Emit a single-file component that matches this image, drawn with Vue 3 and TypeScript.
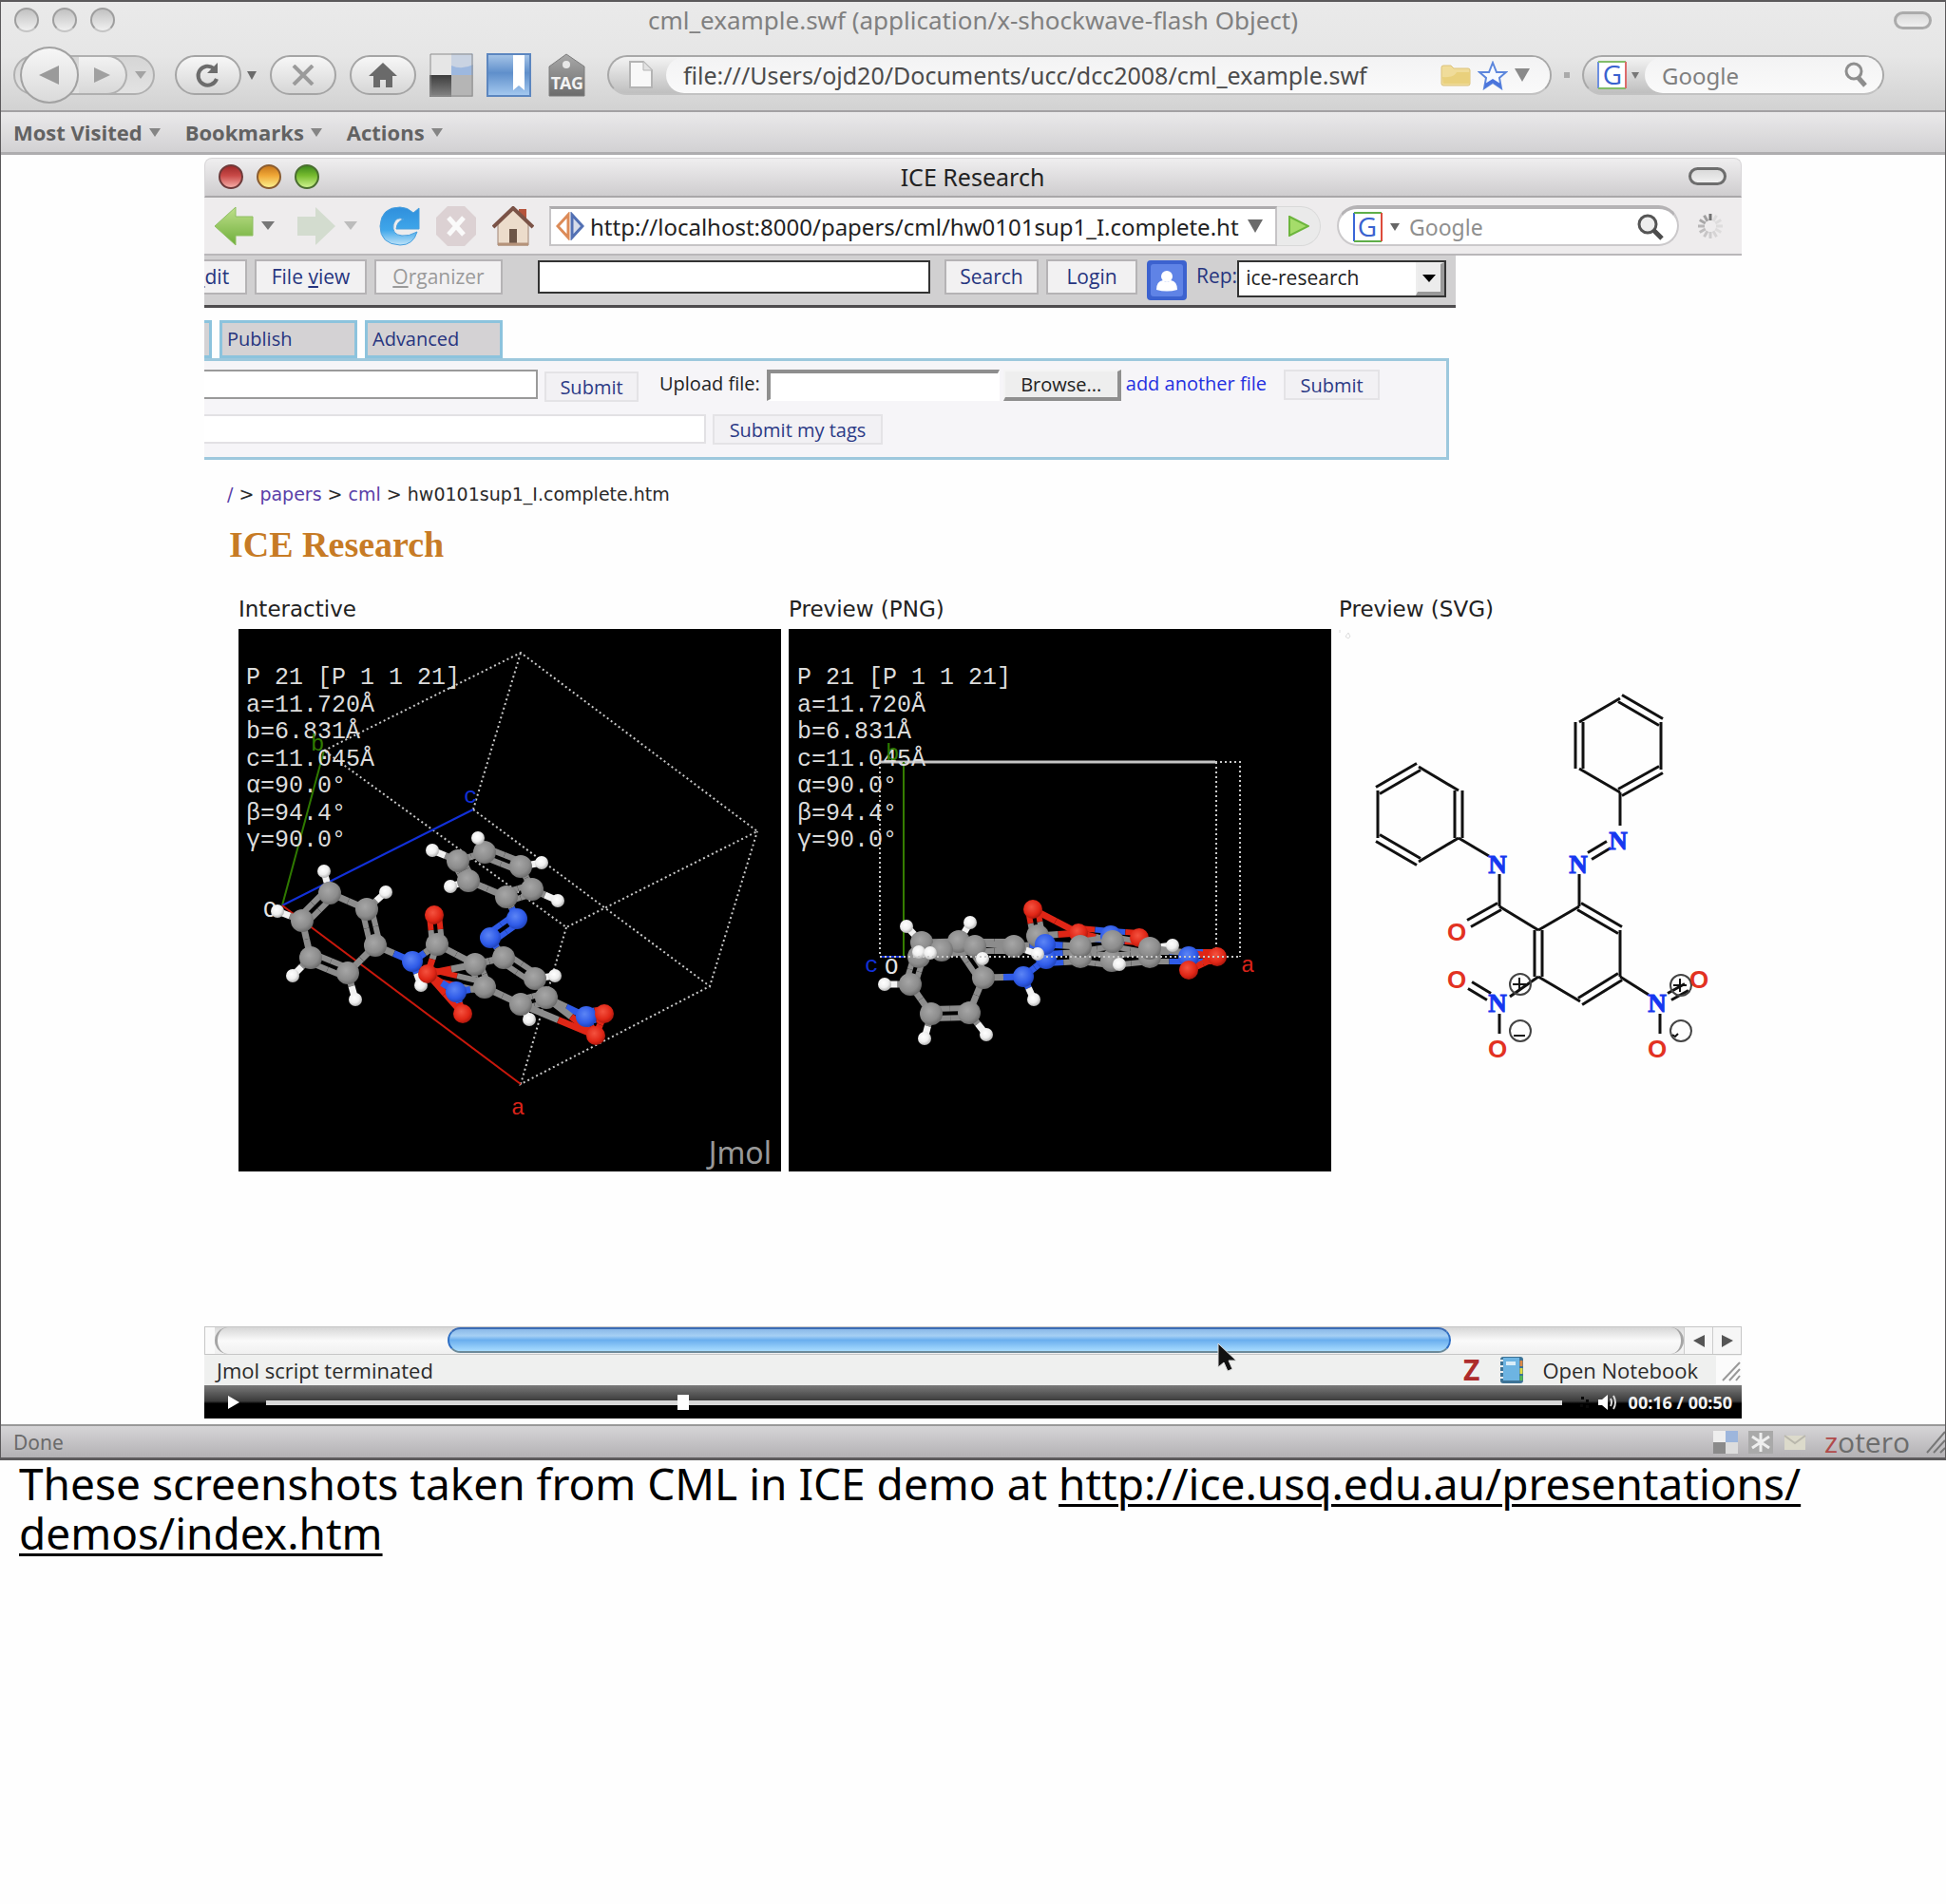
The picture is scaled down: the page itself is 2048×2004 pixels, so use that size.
<script setup lang="ts">
import { ref } from 'vue'

type Element = 'C' | 'H' | 'N' | 'O'
type Atom = [Element, number, number]
type Bond = [number, number, number]
interface Stroke { x1: number; y1: number; x2: number; y2: number; color: string; width: number }

const palette: Record<Element, string> = { C: '#8c8c8c', H: '#f2f2f2', N: '#2f5be8', O: '#e02616' }
const radii: Record<Element, number> = { C: 12, H: 7, N: 11, O: 10 }

const cellInfo = ['P 21 [P 1 1 21]', 'a=11.720Å', 'b=6.831Å', 'c=11.045Å', 'α=90.0°', 'β=94.4°', 'γ=90.0°']
const baselines = [58, 87, 115, 144, 172, 201, 229]

function strokes(atoms: Atom[], bonds: Bond[]): Stroke[] {
  const out: Stroke[] = []
  for (const [a, b, order] of bonds) {
    const [ea, xa, ya] = atoms[a]
    const [eb, xb, yb] = atoms[b]
    const len = Math.hypot(xb - xa, yb - ya) || 1
    const nx = -(yb - ya) / len
    const ny = (xb - xa) / len
    const mx = (xa + xb) / 2
    const my = (ya + yb) / 2
    const shifts = order === 2 ? [-5, 5] : [0]
    for (const s of shifts) {
      const ox = nx * s
      const oy = ny * s
      const width = order === 2 ? 6 : 7
      out.push({ x1: xa + ox, y1: ya + oy, x2: mx + ox, y2: my + oy, color: palette[ea], width })
      out.push({ x1: mx + ox, y1: my + oy, x2: xb + ox, y2: yb + oy, color: palette[eb], width })
    }
  }
  return out
}

const atomsA: Atom[] = [
  ['C', 96, 278], ['C', 135, 295], ['C', 144, 333], ['C', 115, 362], ['C', 76, 346], ['C', 67, 307],
  ['H', 90, 255], ['H', 155, 277], ['H', 41, 297], ['H', 57, 365], ['H', 123, 390],
  ['N', 183, 350], ['H', 192, 375], ['O', 206, 301], ['C', 209, 332],
  ['C', 282, 282], ['C', 309, 274], ['C', 297, 250], ['C', 259, 235], ['C', 231, 244], ['C', 242, 265],
  ['H', 252, 220], ['H', 204, 233], ['H', 223, 271], ['H', 319, 246], ['H', 336, 286],
  ['N', 293, 305], ['N', 265, 325],
  ['O', 199, 363], ['C', 249, 353], ['C', 279, 346], ['C', 312, 368], ['C', 259, 377],
  ['H', 333, 365], ['H', 306, 411], ['C', 324, 388], ['C', 297, 395],
  ['N', 229, 382], ['O', 236, 405], ['O', 376, 428], ['N', 366, 408], ['O', 385, 405],
]
const bondsA: Bond[] = [
  [0, 1, 1], [1, 2, 2], [2, 3, 1], [3, 4, 2], [4, 5, 1], [5, 0, 2],
  [0, 6, 1], [1, 7, 1], [5, 8, 1], [4, 9, 1], [3, 10, 1], [2, 11, 1], [11, 12, 1],
  [11, 14, 1], [14, 13, 2], [14, 28, 1], [14, 29, 1],
  [15, 16, 2], [16, 17, 1], [17, 18, 2], [18, 19, 1], [19, 20, 2], [20, 15, 1],
  [18, 21, 1], [19, 22, 1], [20, 23, 1], [17, 24, 1], [16, 25, 1],
  [15, 26, 1], [26, 27, 2], [27, 30, 1],
  [29, 30, 1], [30, 31, 2], [31, 35, 1], [35, 36, 2], [36, 32, 1], [32, 29, 2],
  [31, 33, 1], [36, 34, 1], [28, 32, 2], [28, 29, 1], [28, 38, 1], [28, 37, 1], [32, 37, 1], [37, 38, 1],
  [35, 40, 1], [36, 39, 1], [35, 39, 1], [40, 41, 2], [41, 39, 1], [40, 39, 1],
]

const atomsB: Atom[] = [
  ['C', 179, 329], ['H', 191, 309], ['C', 140, 330], ['H', 124, 313], ['C', 161, 338], ['C', 196, 334],
  ['C', 237, 334], ['C', 262, 323], ['O', 257, 295], ['N', 271, 347], ['N', 270, 332], ['H', 262, 342],
  ['O', 305, 320], ['N', 339, 323], ['O', 369, 325],
  ['C', 307, 345], ['C', 307, 334], ['C', 340, 349], ['C', 341, 329], ['C', 380, 345], ['C', 380, 336],
  ['H', 404, 333], ['N', 421, 345], ['O', 451, 345], ['O', 421, 359], ['H', 348, 353],
  ['C', 137, 345], ['H', 137, 340], ['H', 149, 341], ['C', 128, 374], ['H', 101, 374], ['C', 150, 405],
  ['C', 190, 404], ['C', 205, 367], ['N', 247, 366], ['H', 258, 390], ['H', 143, 431], ['H', 208, 427],
  ['H', 204, 347],
]
const bondsB: Bond[] = [
  [0, 1, 1], [2, 3, 1], [2, 0, 1], [2, 4, 1], [4, 5, 2], [5, 6, 2], [0, 6, 1], [6, 10, 1], [6, 11, 1],
  [7, 8, 2], [8, 12, 1], [7, 10, 1], [9, 10, 1], [9, 15, 2], [10, 16, 1], [12, 7, 1], [12, 13, 2], [13, 14, 2],
  [12, 18, 1], [16, 18, 2], [15, 17, 2], [18, 20, 2], [17, 19, 2], [14, 20, 1], [20, 21, 1], [19, 22, 2],
  [22, 23, 2], [20, 23, 1], [23, 24, 1], [22, 24, 1], [17, 25, 1],
  [26, 29, 2], [29, 30, 1], [29, 31, 1], [31, 32, 2], [32, 33, 1], [33, 0, 2], [33, 34, 1], [34, 9, 1],
  [34, 35, 1], [31, 36, 1], [32, 37, 1],
]

const strokesA = strokes(atomsA, bondsA)
const strokesB = strokes(atomsB, bondsB)

const nodes: [number, number][] = [
  [84, 145], [41, 170], [41, 220], [84, 245], [126, 220], [126, 170],
  [158, 239], [169, 258], [169, 292], [137, 310],
  [210, 317], [253, 292], [296, 317], [296, 366], [254, 392], [210, 366],
  [253, 258], [296, 207], [296, 172], [339, 148], [339, 98], [296, 73], [253, 98], [253, 147],
  [264, 239], [284, 227], [180, 387], [169, 405], [169, 426], [138, 375], [158, 387],
  [326, 385], [338, 405], [338, 426], [348, 387], [366, 377],
]
const links: Bond[] = [
  [0, 1, 2], [1, 2, 1], [2, 3, 2], [3, 4, 1], [4, 5, 2], [5, 0, 1], [4, 6, 1], [7, 8, 1], [8, 9, 2],
  [8, 10, 1], [10, 11, 1], [11, 12, 2], [12, 13, 1], [13, 14, 2], [14, 15, 1], [15, 10, 2], [11, 16, 1],
  [17, 18, 1], [18, 19, 2], [19, 20, 1], [20, 21, 2], [21, 22, 1], [22, 23, 2], [23, 18, 1], [24, 25, 2],
  [15, 26, 1], [27, 28, 1], [29, 30, 2], [13, 31, 1], [32, 33, 1], [34, 35, 2],
]
const flat = links.flatMap(([a, b, order]) => {
  const [xa, ya] = nodes[a]
  const [xb, yb] = nodes[b]
  const len = Math.hypot(xb - xa, yb - ya)
  const nx = -(yb - ya) / len
  const ny = (xb - xa) / len
  return (order === 2 ? [-4, 4] : [0]).map((s) => ({
    x1: xa + nx * s, y1: ya + ny * s, x2: xb + nx * s, y2: yb + ny * s,
  }))
})
const symbols: Atom[] = [
  ['N', 167, 257], ['N', 252, 257], ['N', 294, 232], ['N', 167, 403], ['N', 335, 403],
  ['O', 124, 328], ['O', 124, 378], ['O', 167, 451], ['O', 335, 451], ['O', 379, 378],
]
const charges: [number, number, string][] = [
  [191, 374, 'M183 374h14M190 367v14'], [191, 423, 'M184 428h12'],
  [360, 375, 'M352 375h14M359 368v14'], [360, 423, 'M351 427l3 2l3 -3'],
]

const spokes = [0.8, 0.1, 0.1, 0.1, 0.1, 0.15, 0.2, 0.25, 0.3, 0.35, 0.45, 0.5]

const address = ref('file:///Users/ojd20/Documents/ucc/dcc2008/cml_example.swf')
const innerAddress = ref('http://localhost:8000/papers/cml/hw0101sup1_I.complete.htm')
const position = ref(16)
</script>

<template>
  <div class="page">
    <svg class="defs" width="0" height="0" aria-hidden="true">
      <defs>
        <radialGradient id="ball-C" cx="42%" cy="38%" r="62%"><stop offset="0" stop-color="#a6a6a6" /><stop offset="0.7" stop-color="#8c8c8c" /><stop offset="1" stop-color="#6c6c6c" /></radialGradient>
        <radialGradient id="ball-H" cx="42%" cy="38%" r="62%"><stop offset="0" stop-color="#ffffff" /><stop offset="0.6" stop-color="#efefef" /><stop offset="1" stop-color="#b4b4b4" /></radialGradient>
        <radialGradient id="ball-N" cx="42%" cy="38%" r="62%"><stop offset="0" stop-color="#5c85f5" /><stop offset="0.7" stop-color="#2f5be8" /><stop offset="1" stop-color="#2144bc" /></radialGradient>
        <radialGradient id="ball-O" cx="42%" cy="38%" r="62%"><stop offset="0" stop-color="#f4523f" /><stop offset="0.7" stop-color="#e02616" /><stop offset="1" stop-color="#ac180d" /></radialGradient>
        <linearGradient id="green" x2="0" y2="1"><stop offset="0" stop-color="#bfe08c" /><stop offset="1" stop-color="#6fae3a" /></linearGradient>
        <linearGradient id="sky" x2="0" y2="1"><stop offset="0" stop-color="#2f8fdc" /><stop offset="0.6" stop-color="#3fa6ea" /><stop offset="1" stop-color="#bfe3f8" /></linearGradient>
        <linearGradient id="slate" x2="0" y2="1"><stop offset="0" stop-color="#a9a9a9" /><stop offset="1" stop-color="#6c6c6c" /></linearGradient>
        <linearGradient id="coal" x2="0" y2="1"><stop offset="0" stop-color="#3c3c3c" /><stop offset="1" stop-color="#858585" /></linearGradient>
        <linearGradient id="book" x2="0" y2="1"><stop offset="0" stop-color="#a8c6e8" /><stop offset="0.45" stop-color="#5f8fcb" /><stop offset="1" stop-color="#a6caf0" /></linearGradient>
      </defs>
    </svg>

    <section class="browser">
      <header class="chrome">
        <div class="titlebar">
          <span class="lights"><i></i><i></i><i></i></span>
          <span class="window-title">cml_example.swf (application/x-shockwave-flash Object)</span>
          <span class="pill"></span>
        </div>
        <div class="toolbar">
          <div class="history">
            <button class="back" aria-label="Back"><svg width="24" height="22"><path d="M1 11 22 1V21Z" fill="#9a9a9a" /></svg></button>
            <button class="forward" aria-label="Forward"><svg width="18" height="18"><path d="M17 9 0 1V17Z" fill="#a0a0a0" /></svg></button>
            <button class="recent" aria-label="Recent pages"><svg width="12" height="8"><path d="M0 0H12L6 8Z" fill="#a3a3a3" /></svg></button>
          </div>
          <button class="capsule reload" aria-label="Reload"><svg width="28" height="28"><path d="M20 7A10 10 0 1 0 23 18" fill="none" stroke="#6c6c6c" stroke-width="4" /><path d="M24 1V12H13Z" fill="#6c6c6c" /></svg></button>
          <svg class="reload-caret" width="10" height="9"><path d="M0 0H10L5 9Z" fill="#6a6a6a" /></svg>
          <button class="capsule stop" aria-label="Stop"><svg width="24" height="22"><path d="M2 1 22 21M22 1 2 21" stroke="#9b9b9b" stroke-width="4" /></svg></button>
          <button class="capsule home" aria-label="Home"><svg width="30" height="26"><path d="M15 0 30 14H25V26H18V18H12V26H5V14H0Z" fill="#6a6a6a" /></svg></button>
          <button class="bare delicious" aria-label="Delicious"><svg width="46" height="46"><path d="M0 0H23V23H0Z" fill="#e6e6e6" /><path d="M23 0H46V23H23Z" fill="#9db8df" /><path d="M23 0H46V12Q34 18 23 13Z" fill="#c9d3e2" /><path d="M0 23H23V46H0Z" fill="url(#coal)" /><path d="M23 23H46V46H23Z" fill="#b5b5b5" /><path d="M1 1H45V45H1Z" fill="none" stroke="#8d8d8d" /></svg></button>
          <button class="bare shelf" aria-label="Bookmarks sidebar"><svg width="47" height="46"><path d="M1 1H46V45H1Z" fill="url(#book)" stroke="#5c86bf" stroke-width="2" /><path d="M28 2H40V39L34 34 28 39Z" fill="#fff" /></svg></button>
          <button class="bare tag" aria-label="Tag"><svg width="39" height="46"><path d="M19 1 38 14V45H1V14Z" fill="url(#slate)" stroke="#7d7d7d" /><circle cx="19" cy="12" r="4" fill="#e8e8e8" /><text x="20" y="38" text-anchor="middle" class="tag-text">TAG</text></svg></button>
          <div class="location">
            <svg class="doc" width="25" height="30"><path d="M1 1H15L24 10V28H1Z" fill="#f8f8f8" stroke="#b4b4b4" stroke-width="2" /><path d="M15 1V10H24" fill="#e2e2e2" stroke="#b4b4b4" /></svg>
            <div class="field">
              <input v-model="address" aria-label="Address" />
              <svg width="32" height="24"><path d="M1 4Q1 2 3 2H11L14 5H29Q31 5 31 7V21Q31 23 29 23H3Q1 23 1 21Z" fill="#f0dc9a" stroke="#dcc27a" /><path d="M2 14Q14 15 17 9H31V21H3Z" fill="#e9d07c" /></svg>
              <svg width="32" height="31"><path d="M16 2 20 12 30 12 23 18 25 29 16 23 7 29 9 18 2 12 12 12Z" fill="#f6faff" stroke="#5c86dc" stroke-width="2" /><path d="M8 24 16 19 24 24 25 29 16 23 7 29Z" fill="#4a74dc" /></svg>
              <svg width="16" height="14"><path d="M0 0H16L8 14Z" fill="#8a8a8a" /></svg>
            </div>
          </div>
          <span class="grip"></span>
          <div class="finder">
            <svg class="glogo" width="32" height="32"><path d="M2 2H30V30H2Z" fill="#fff" /><path d="M1 2V30" stroke="#6d8fe0" stroke-width="2" /><path d="M1 2H30M1 30H30" stroke="#83bd6a" stroke-width="2" /><path d="M30 2V30" stroke="#dd6b6b" stroke-width="2" /><text x="16" y="26" text-anchor="middle">G</text></svg>
            <svg class="gcaret" width="8" height="7"><path d="M0 0H8L4 7Z" fill="#777" /></svg>
            <div class="field">
              <input placeholder="Google" aria-label="Search the web" />
              <svg width="26" height="28"><circle cx="11" cy="10" r="8" fill="none" stroke="#8e8e8e" stroke-width="3" /><path d="M15 16 23 25" stroke="#8e8e8e" stroke-width="5" /></svg>
            </div>
          </div>
        </div>
      </header>

      <nav class="bookmarks">
        <button>Most Visited <svg width="12" height="9"><path d="M0 0H12L6 9Z" /></svg></button>
        <button>Bookmarks <svg width="12" height="9"><path d="M0 0H12L6 9Z" /></svg></button>
        <button>Actions <svg width="12" height="9"><path d="M0 0H12L6 9Z" /></svg></button>
      </nav>

      <main class="viewport">
        <div class="inner">
          <div class="inner-title">
            <span class="lights aqua"><i class="red"></i><i class="amber"></i><i class="lime"></i></span>
            <span class="inner-name">ICE Research</span>
            <span class="pill"></span>
          </div>

          <div class="inner-toolbar">
            <button class="bare" aria-label="Back"><svg width="42" height="42"><path d="M1 21 23 1V11H41V31H23V41Z" fill="url(#green)" stroke="#8fbf63" /></svg></button>
            <svg class="caret" width="14" height="9"><path d="M0 0H14L7 9Z" fill="#777" /></svg>
            <button class="bare" aria-label="Forward"><svg width="42" height="42"><path d="M41 21 20 1V11H1V31H20V41Z" fill="#d3dccf" /></svg></button>
            <svg class="caret" width="14" height="9"><path d="M0 0H14L7 9Z" fill="#bcbcbc" /></svg>
            <button class="bare" aria-label="Reload"><svg width="43" height="42"><path d="M42 2V24H18Q19 15 26 14 18 10 15 19 13 30 24 31 31 32 40 27 36 41 22 41 1 40 1 21 2 1 22 1 30 1 36 7Z" fill="url(#sky)" stroke="#4a9fdd" /></svg></button>
            <button class="bare spaced" aria-label="Stop"><svg width="44" height="42"><path d="M13 0H31L43 12V30L31 42H13L1 30V12Z" fill="#dcd1d3" /><path d="M14 12 30 30M30 12 14 30" stroke="#fafafa" stroke-width="5" /></svg></button>
            <button class="bare spaced" aria-label="Home"><svg width="44" height="42"><path d="M28 3H36V16H28Z" fill="#b6543c" /><path d="M6 19 22 3 38 19V41H6Z" fill="#ecdccb" stroke="#a08474" /><path d="M1 22 22 2 43 22" fill="none" stroke="#7b5347" stroke-width="4" /><path d="M18 24H26V41H18Z" fill="#6d5648" /><path d="M6 40H38" stroke="#b5937a" stroke-width="3" /></svg></button>
            <div class="inner-location">
              <svg width="30" height="30"><path d="M13 3 2 15 13 27Z" fill="#fff" stroke="#dc8b58" stroke-width="3" /><path d="M17 3 28 15 17 27Z" fill="#d7dcea" stroke="#5270b4" stroke-width="3" /></svg>
              <input v-model="innerAddress" aria-label="Inner address" />
              <svg width="16" height="14"><path d="M0 0H16L8 14Z" fill="#6b6b6b" /></svg>
            </div>
            <button class="go" aria-label="Go"><svg width="22" height="22"><path d="M1 1 21 11 1 21Z" fill="#a5dc6a" stroke="#6cb53c" stroke-width="2" /></svg></button>
            <div class="inner-finder">
              <svg class="glogo" width="31" height="32"><path d="M1 1V31" stroke="#3a66d8" stroke-width="2" /><path d="M1 1H30M1 31H30" stroke="#5fae4a" stroke-width="2" /><path d="M30 1V31" stroke="#dd4b3b" stroke-width="2" /><text x="15" y="26" text-anchor="middle">G</text></svg>
              <svg width="10" height="8"><path d="M0 0H10L5 8Z" fill="#666" /></svg>
              <input placeholder="Google" aria-label="Inner search" />
              <svg width="29" height="28"><circle cx="11" cy="11" r="9" fill="#eee" stroke="#555" stroke-width="3" /><path d="M17 17 26 26" stroke="#4c4c4c" stroke-width="5" /></svg>
            </div>
            <svg class="spinner" width="30" height="32"><path v-for="(opacity, i) in spokes" :key="i" d="M15 10V3" stroke="#555" stroke-width="3" :opacity="opacity" :transform="`rotate(${i * 30} 15 16)`" /></svg>
          </div>

          <div class="appbar">
            <button class="flatbtn edit"><u>E</u>dit</button>
            <button class="flatbtn view">File <u>v</u>iew</button>
            <button class="flatbtn organizer" disabled><u>O</u>rganizer</button>
            <input class="query" aria-label="Site search" />
            <button class="flatbtn search">Search</button>
            <button class="flatbtn login">Login</button>
            <svg class="person" width="42" height="42"><rect width="42" height="42" rx="4" fill="#3c62cf" /><rect x="4" y="4" width="34" height="34" rx="3" fill="#5f83e6" /><circle cx="21" cy="17" r="6" fill="#fff" /><path d="M10 31Q10 22 17 21 21 25 25 21 32 22 32 31 21 34 10 31Z" fill="#fff" /></svg>
            <label for="rep">Rep:</label>
            <div class="select">
              <select id="rep"><option>ice-research</option></select>
              <span class="drop"><svg width="14" height="8"><path d="M0 0H14L7 8Z" /></svg></span>
            </div>
          </div>

          <div class="tabs">
            <span class="tab stub"></span>
            <button class="tab">Publish</button>
            <button class="tab">Advanced</button>
          </div>
          <div class="panel">
            <div class="line one">
              <input class="comment" aria-label="Comment" />
              <button class="soft low">Submit</button>
              <label for="upload">Upload file:</label>
              <input id="upload" class="file" readonly />
              <button class="browse">Browse...</button>
              <a href="#add">add another file</a>
              <button class="soft end">Submit</button>
            </div>
            <div class="line two">
              <input class="tags" aria-label="Tags" />
              <button class="soft wide">Submit my tags</button>
            </div>
          </div>

          <nav class="crumbs"><a href="#root">/</a> &gt; <a href="#papers">papers</a> &gt; <a href="#cml">cml</a> &gt; hw0101sup1_I.complete.htm</nav>
          <h1>ICE Research</h1>

          <div class="gallery">
            <figure>
              <figcaption>Interactive</figcaption>
              <svg class="scene" viewBox="0 0 571 571" width="571" height="571">
                <g class="cell">
                  <path d="M90 128 297 25 546 213 345 314ZM247 190 297 25M247 190 496 376 546 213M345 314 297 479 496 376" />
                </g>
                <path d="M46 291 90 128" stroke="#2f7a00" stroke-width="2" />
                <path d="M46 291 247 190" stroke="#1230d8" stroke-width="2" />
                <path d="M46 291 297 479" stroke="#c8180c" stroke-width="2" />
                <text class="axis" x="26" y="303" fill="#e4e4e4">O</text>
                <line v-for="(s, i) in strokesA" :key="'s' + i" :x1="s.x1" :y1="s.y1" :x2="s.x2" :y2="s.y2" :stroke="s.color" :stroke-width="s.width" />
                <circle v-for="(a, i) in atomsA" :key="'a' + i" :cx="a[1]" :cy="a[2]" :r="radii[a[0]]" :fill="`url(#ball-${a[0]})`" />
                <text v-for="(t, i) in cellInfo" :key="t" class="info" x="8" :y="baselines[i]">{{ t }}</text>
                <text class="axis" x="76" y="128" fill="#2f7a00">b</text>
                <text class="axis" x="237" y="183" fill="#1230d8">c</text>
                <text class="axis" x="287" y="511" fill="#d8231a">a</text>
                <text class="jmol" x="561" y="563" text-anchor="end">Jmol</text>
              </svg>
            </figure>
            <figure>
              <figcaption>Preview (PNG)</figcaption>
              <svg class="scene" viewBox="0 0 571 571" width="571" height="571">
                <path d="M96 140H449" stroke="#c4c4c4" stroke-width="3" />
                <path d="M121 140V345" stroke="#357d00" stroke-width="2" />
                <g class="cell"><path d="M449 140H475V345M450 140V345M96 140V345" /></g>
                <line v-for="(s, i) in strokesB" :key="'s' + i" :x1="s.x1" :y1="s.y1" :x2="s.x2" :y2="s.y2" :stroke="s.color" :stroke-width="s.width" />
                <circle v-for="(a, i) in atomsB" :key="'a' + i" :cx="a[1]" :cy="a[2]" :r="radii[a[0]]" :fill="`url(#ball-${a[0]})`" />
                <path d="M96 345H121" stroke="#1230d8" stroke-width="2" />
                <g class="cell"><path d="M96 345H475" /></g>
                <text v-for="(t, i) in cellInfo" :key="t" class="info" x="9" :y="baselines[i]">{{ t }}</text>
                <text class="axis" x="102" y="138" fill="#2f7a00">b</text>
                <text class="axis" x="80" y="361" fill="#1230d8">c</text>
                <text class="axis" x="101" y="363" fill="#e4e4e4">O</text>
                <text class="axis" x="476" y="361" fill="#d8231a">a</text>
              </svg>
            </figure>
            <figure>
              <figcaption>Preview (SVG)</figcaption>
              <svg class="sketch" viewBox="0 0 424 571" width="424" height="571">
                <path d="M1 1V4M10 4 7 8 10 10 12 8Z" fill="none" stroke="#dcdcdc" />
                <line v-for="(l, i) in flat" :key="i" :x1="l.x1" :y1="l.y1" :x2="l.x2" :y2="l.y2" stroke="#111" stroke-width="3" />
                <g v-for="(c, i) in charges" :key="'c' + i"><circle :cx="c[0]" :cy="c[1]" r="11" fill="none" stroke="#444" stroke-width="2" /><path :d="c[2]" fill="none" stroke="#111" stroke-width="2" /></g>
                <text v-for="(s, i) in symbols" :key="'t' + i" :x="s[1]" :y="s[2]" :class="s[0] === 'N' ? 'nitro' : 'oxy'" text-anchor="middle">{{ s[0] }}</text>
              </svg>
            </figure>
          </div>

          <div class="scrollbar">
            <span class="cap"></span>
            <div class="track"><span class="thumb"></span></div>
            <button aria-label="Scroll left"><svg width="12" height="13"><path d="M12 0V13L0 6Z" fill="#555" /></svg></button>
            <button aria-label="Scroll right"><svg width="12" height="13"><path d="M0 0V13L12 6Z" fill="#555" /></svg></button>
            <svg class="cursor" width="24" height="34"><path d="M2 2V27L8 22 12 31 17 29 13 20H21Z" fill="#111" stroke="#ddd" /></svg>
          </div>

          <div class="inner-status">
            <span>Jmol script terminated</span>
            <b>Z</b>
            <svg class="notebook" width="28" height="32"><rect x="2" y="2" width="24" height="28" rx="3" fill="#3d7396" /><rect x="5" y="3" width="17" height="24" fill="#6db4e2" /><path d="M8 7H18V11H8Z" fill="#d9edf8" /><path d="M24 6V12" stroke="#d84" stroke-width="3" /><path d="M24 14V20" stroke="#dd4" stroke-width="3" /><path d="M24 22V27" stroke="#5b5" stroke-width="3" /><path d="M1 6H5M1 12H5M1 18H5M1 24H5" stroke="#eee" stroke-width="2" /></svg>
            <span>Open Notebook</span>
            <svg class="resize" width="27" height="30"><rect width="27" height="30" fill="#fbfbfb" /><path d="M7 26 25 7M14 26 25 14M21 26 25 21" stroke="#999" stroke-width="2" /></svg>
          </div>

          <div class="player">
            <button class="bare" aria-label="Play"><svg width="12" height="14"><path d="M0 0 12 7 0 14Z" fill="#fff" /></svg></button>
            <input v-model="position" type="range" min="0" max="50" aria-label="Position" />
            <svg class="dots" width="12" height="14"><path d="M3 1h3v3h-3zM8 4h3v3h-3zM2 9h3v3h-3zM8 10h3v3h-3z" fill="#0a0a0a" /></svg>
            <svg width="22" height="18"><path d="M1 6H5L11 1V17L5 12H1Z" fill="#fff" /><path d="M14 5Q16 9 14 13M17 2Q21 9 17 16" fill="none" stroke="#ddd" stroke-width="2" /></svg>
            <span>00:16 / 00:50</span>
          </div>
        </div>
      </main>

      <footer class="status">
        <span class="done">Done</span>
        <svg width="26" height="24"><path d="M0 0H13V12H0Z" fill="#eee" /><path d="M13 0H26V12H13Z" fill="#9db6dc" /><path d="M0 12H13V24H0Z" fill="#8a8a8a" /><path d="M13 12H26V24H13Z" fill="#ddd" /></svg>
        <svg width="26" height="24"><rect width="26" height="24" fill="#a9a9a9" /><path d="M13 2V22M4 6 22 18M22 6 4 18" stroke="#eee" stroke-width="3" /></svg>
        <svg width="24" height="18"><path d="M1 2H23V17H1Z" fill="#dcdacb" /><path d="M1 2 12 10 23 2" fill="none" stroke="#b9b7ac" stroke-width="2" /></svg>
        <span class="zotero"><em>z</em>otero</span>
        <svg class="corner" width="20" height="24"><path d="M1 23 20 1M8 23 20 10M15 23 20 18" stroke="#777" stroke-width="2" /></svg>
      </footer>
    </section>

    <p class="notes">These screenshots taken from CML in ICE demo at <a href="http://ice.usq.edu.au/presentations/demos/index.htm">http://ice.usq.edu.au/presentations/<wbr />demos/index.htm</a></p>
  </div>
</template>

<style>
body { margin: 0; background: #fefefe; }
</style>

<style scoped>
* { box-sizing: border-box; }
.page { font-family: "Noto Sans", "Open Sans", sans-serif; color: #222; }
.page svg { display: block; flex: none; }
.page .defs { position: absolute; }
button, input, select { font: inherit; color: inherit; margin: 0; border-radius: 0; outline: none; }
button { padding: 0; border: 0; background: none; flex: none; }
.bare { display: block; }
input { min-width: 0; }
a { text-decoration: none; }

.browser { border: 1px solid #5b595b; border-top-width: 2px; }
.chrome { height: 116px; background: linear-gradient(#eaeaea, #e6e6e6 50%, #d2d2d2); border-bottom: 2px solid #a3a1a3; }
.titlebar { display: flex; align-items: center; justify-content: space-between; height: 38px; padding: 0 14px; font-size: 26px; line-height: 32px; color: #808080; }
.lights { display: flex; gap: 14px; width: 108px; }
.lights i { width: 26px; height: 26px; border: 2px solid #9e9e9e; border-bottom-color: #c4c4c4; border-radius: 50%; background: linear-gradient(#c2c2c2, #f0f0f0); }
.pill { width: 40px; height: 19px; border: 3px solid #ababab; border-radius: 10px; background: linear-gradient(#dadada, #f0f0f0); }
.titlebar .pill { margin-left: 68px; }

.toolbar { display: flex; align-items: center; height: 76px; padding: 2px 64px 0 13px; }
.history { display: flex; flex: none; align-items: center; height: 42px; width: 149px; margin-right: 21px; border: 2px solid #b0b0b0; border-radius: 21px; background: linear-gradient(#d6d6d6, #e2e2e2); }
.back { display: grid; place-items: center; width: 62px; height: 60px; margin-left: 5px; border: 2px solid #a2a2a2; border-radius: 50%; background: linear-gradient(#f6f6f6, #dadada); }
.forward { display: grid; place-items: center; width: 51px; height: 42px; border: 2px solid #b0b0b0; border-left: 0; border-radius: 0 21px 21px 0; background: linear-gradient(#f2f2f2, #d8d8d8); }
.recent { margin-left: 8px; }
.capsule { display: grid; place-items: center; width: 70px; height: 42px; border: 2px solid #a5a5a5; border-radius: 21px; background: linear-gradient(#f7f7f7, #d6d6d6); }
.reload-caret { margin: 0 14px 0 6px; }
.home { margin: 0 14px; }
.shelf { margin: 0 18px 0 14px; }
.tag-text { font: bold 18px "Noto Sans", sans-serif; fill: #f2f2f2; }
.location, .finder { display: flex; align-items: center; height: 42px; border: 2px solid #a8a8a8; border-bottom-color: #c2c2c2; border-radius: 21px; background: linear-gradient(#f3f3f3, #bfbfbf); }
.location { flex: 1; margin-left: 23px; padding-left: 21px; }
.finder { flex: none; width: 318px; padding-left: 14px; }
.field { display: flex; align-items: center; flex: 1; min-width: 0; align-self: stretch; border-radius: 20px; background: linear-gradient(#f3f3f4, #fafafa); }
.location .field { margin-left: 14px; padding: 0 21px 0 18px; gap: 7px; }
.finder .field { padding: 0 15px 0 18px; }
.field input { flex: 1; width: 0; height: 36px; padding: 0; border: 0; background: none; font-size: 25px; line-height: 34px; color: #4c4c4c; }
.finder input { font-size: 24px; }
.finder input::placeholder { color: #7f7f7f; opacity: 1; }
.grip { width: 6px; height: 6px; margin: 0 13px; background: #aaa; }
.glogo text { font: 28px "Open Sans", sans-serif; fill: #3a62cf; }
.gcaret { margin: 0 6px 0 4px; }

.bookmarks { display: flex; align-items: center; gap: 26px; height: 45px; padding-left: 13px; background: linear-gradient(#eae9ea, #d2d1d3); border-bottom: 3px solid #aeadaf; }
.bookmarks button { display: flex; align-items: center; gap: 7px; font: bold 22px/28px "Open Sans", sans-serif; color: #626262; }
.bookmarks path { fill: #858585; }

.viewport { padding: 3px 214px 6px; background: #fefefe; }
.inner { background: #fefefe; }
.inner-title { display: flex; align-items: center; justify-content: space-between; height: 42px; padding: 0 15px 2px 14px; border: 1px solid #d8d6d8; border-bottom: 2px solid #a9a7a9; border-radius: 8px 8px 0 0; background: linear-gradient(#efeeef, #cfcdcf); font-size: 25px; line-height: 32px; color: #222; }
.inner-title .pill { border-color: #6d6d6d; margin-left: 68px; }
.inner-title .lights .red { background: linear-gradient(#a02a2a, #c94a48 45%, #f5aaa4); border-color: #6e3a3a; }
.inner-title .lights .amber { background: linear-gradient(#c8781c, #f0a838 45%, #fbf08c); border-color: #8a5c30; }
.inner-title .lights .lime { background: linear-gradient(#3f8a1c, #78bc30 45%, #ccf28c); border-color: #4a6e30; }

.inner-toolbar { display: flex; align-items: center; height: 61px; padding: 0 18px 0 10px; background: #eeeced; border-bottom: 2px solid #b9b7b9; }
.caret { margin: 0 23px 0 8px; }
.spaced { margin-left: 16px; }
.inner-location { display: flex; align-items: center; flex: 1; height: 42px; margin-left: 16px; padding: 0 13px 0 5px; border: 2px solid #c6c4c6; border-top: 3px solid #adabad; background: #fff; }
.inner-location input { flex: 1; width: 0; height: 36px; margin: 0 8px 0 6px; padding: 0; border: 0; background: none; font-size: 24px; color: #222; }
.go { display: grid; place-items: center; width: 46px; height: 42px; border: 1px solid #d9d9d9; border-left: 0; border-radius: 0 21px 21px 0; background: #eaeaea; }
.inner-finder { display: flex; flex: none; align-items: center; width: 360px; height: 43px; margin: 0 18px 0 17px; padding: 0 13px 0 15px; border: 2px solid #cbc9cb; border-top: 4px solid #b5b3b5; border-radius: 22px; background: #fff; }
.inner-finder input { flex: 1; width: 0; height: 34px; margin-left: 10px; padding: 0; border: 0; font-size: 23px; }
.inner-finder input::placeholder { color: #8f8f8f; opacity: 1; }
.inner-finder .glogo { margin-right: 8px; }

.appbar { display: flex; width: 1317px; max-width: 100%; height: 55px; padding-top: 4px; overflow: hidden; background: #d1d0d1; border-bottom: 3px solid #4e4c4e; font: 21px/30px "Open Sans", sans-serif; color: #27357f; }
.flatbtn { height: 37px; padding-bottom: 2px; border: 2px solid #b5b3b5; background: #f2f1f2; }
.flatbtn:disabled { color: #9a9a9a; }
.edit { width: 75px; margin-left: -30px; }
.view { width: 118px; margin-left: 8px; }
.organizer { width: 135px; margin-left: 8px; }
.query { width: 413px; height: 35px; margin: 1px 15px 0 37px; border: 2px solid #333; background: #fff; }
.search { width: 99px; }
.login { width: 96px; margin-left: 8px; }
.person { margin: 1px 10px 0; }
.appbar label { padding-top: 2px; }
.select { display: flex; width: 220px; height: 39px; margin-top: 1px; border: 2px solid #333; background: #fff; }
.select select { flex: 1; min-width: 0; appearance: none; padding: 0 0 4px 7px; border: 0; background: #fff; color: #222; }
.drop { display: grid; place-items: center; width: 30px; border: 2px solid #eee; border-right: 4px solid #999; border-bottom: 4px solid #999; background: #ececec; }

.tabs { display: flex; gap: 8px; height: 53px; padding-top: 13px; }
.tab { width: 145px; height: 40px; padding: 0 5px; border: 3px solid #8cc3dd; background: #d4d2d4; text-align: left; font: 20px/30px "Open Sans", sans-serif; color: #27357f; }
.stub { width: 8px; padding: 0; border-left: 0; }
.panel { width: 1310px; max-width: 100%; height: 107px; padding-top: 9px; overflow: hidden; border: 3px solid #9dc8dd; border-left: 0; background: #f6f5f8; font: 20px/30px "Open Sans", sans-serif; }
.line { display: flex; height: 47px; }
.comment { width: 371px; height: 31px; margin-left: -20px; border: 2px solid #9a9a9a; background: #fff; }
.soft { height: 32px; padding-bottom: 1px; border: 2px solid #e4e3e6; background: #f2f1f4; color: #2c3a86; }
.low { width: 99px; margin: 2px 22px 0 7px; }
.file { width: 245px; height: 33px; margin-left: 7px; border: 2px solid #fff; border-top: 4px solid #8e8e8e; border-left: 4px solid #8e8e8e; background: #fff; }
.browse { width: 124px; height: 33px; margin: 0 5px 0 4px; border: 2px solid #f4f4f4; border-right: 4px solid #8f8f8f; border-bottom: 4px solid #8f8f8f; background: #eee; line-height: 24px; }
.line a { color: #2430e0; }
.end { width: 101px; margin-left: 18px; }
.tags { width: 548px; height: 31px; margin-left: -20px; border: 2px solid #e2e1e4; background: #fff; }
.wide { width: 179px; margin-left: 7px; }

.crumbs { margin: 21px 0 0 24px; font: 19px/30px "DejaVu Sans", sans-serif; color: #2a2a2a; }
.crumbs a { color: #5a3fa8; }
h1 { margin: 18px 0 0 26px; font: bold 38px/40px "Liberation Serif", serif; color: #c77b25; }
.gallery { display: flex; gap: 8px; margin: 34px 0 163px 36px; }
figure { margin: 0; }
figcaption { height: 35px; font: 23px/28px "DejaVu Sans", sans-serif; color: #222; }
.scene { background: #000; }
.cell { fill: none; stroke: #c9c9c9; stroke-width: 2; stroke-dasharray: 2 3; }
.info { font: 25px "Liberation Mono", monospace; fill: #dcdcdc; }
.axis { font: 24px "Liberation Mono", monospace; }
.jmol { font: 32px "Noto Sans", sans-serif; fill: #989898; }
.nitro { font: bold 27px "Liberation Serif", serif; fill: #1637f0; stroke: #1637f0; }
.oxy { font: bold 26px "Liberation Sans", sans-serif; fill: #e23222; }

.scrollbar { position: relative; display: flex; height: 30px; border: 1px solid #c6c6c6; background: linear-gradient(#d9d9d9, #fafafa 50%, #efefef); }
.cap { width: 10px; background: #fafafa; }
.track { flex: 1; padding: 0 15%; border: 0 solid #a5a5a5; border-width: 0 3px; border-radius: 14px; background: linear-gradient(#d6d6d6, #fafafa 50%, #f0f0f0); }
.thumb { display: block; height: 27px; border: 2px solid #2f6fc4; border-color: #3b6cb5 #2f6fc4 #6c8a9a; border-radius: 14px; background: linear-gradient(#8ab8e8, #a6d0f4 30%, #6aaeee 50%, #a8dcff); }
.scrollbar button { display: grid; place-items: center; width: 30px; border-left: 1px solid #ccc; background: #f6f6f6; }
.cursor { position: absolute; left: 1064px; top: 15px; }
.inner-status { display: flex; align-items: center; height: 32px; padding: 0 0 1px 13px; background: #eff0ef; font: 22px/30px "Open Sans", sans-serif; color: #2a2a2a; }
.inner-status b { margin-left: auto; font: bold 30px/30px "Open Sans", sans-serif; color: #ad2b2b; }
.notebook { margin: 0 18px 0 20px; }
.resize { margin-left: 19px; }
.player { display: flex; align-items: center; height: 35px; padding: 0 10px 0 25px; background: linear-gradient(#7a7a7a, #3a3a3a 48%, #000 55%); font: bold 18px/28px "Open Sans", sans-serif; color: #f2f2f2; }
.player input { flex: 1; appearance: none; height: 16px; margin: 0 17px 0 28px; padding: 0; background: linear-gradient(transparent 6px, #d8d8d8 6px, #d8d8d8 11px, transparent 11px); }
.player input::-webkit-slider-thumb { appearance: none; width: 12px; height: 16px; background: #fff; }
.dots { margin-right: 8px; }
.player span { margin-left: 11px; }

.status { display: flex; align-items: center; gap: 11px; height: 37px; padding-left: 13px; border-top: 2px solid #999; border-bottom: 2px solid #5e5c5e; background: linear-gradient(#d6d5d7, #b3b1b4); }
.done { margin-right: auto; font-size: 21px; line-height: 28px; color: #6a6a6a; }
.zotero { margin-left: 8px; font: 30px/30px "Open Sans", sans-serif; color: #6c6c6c; }
.zotero em { font-style: normal; color: #b04a4a; }
.corner { margin-left: 6px; }
.notes { margin: -2px 0 0; padding: 0 20px; font-size: 46px; line-height: 52px; color: #000; }
.notes a { color: #000; text-decoration: underline; text-decoration-thickness: 3px; text-underline-offset: 4px; }
</style>
